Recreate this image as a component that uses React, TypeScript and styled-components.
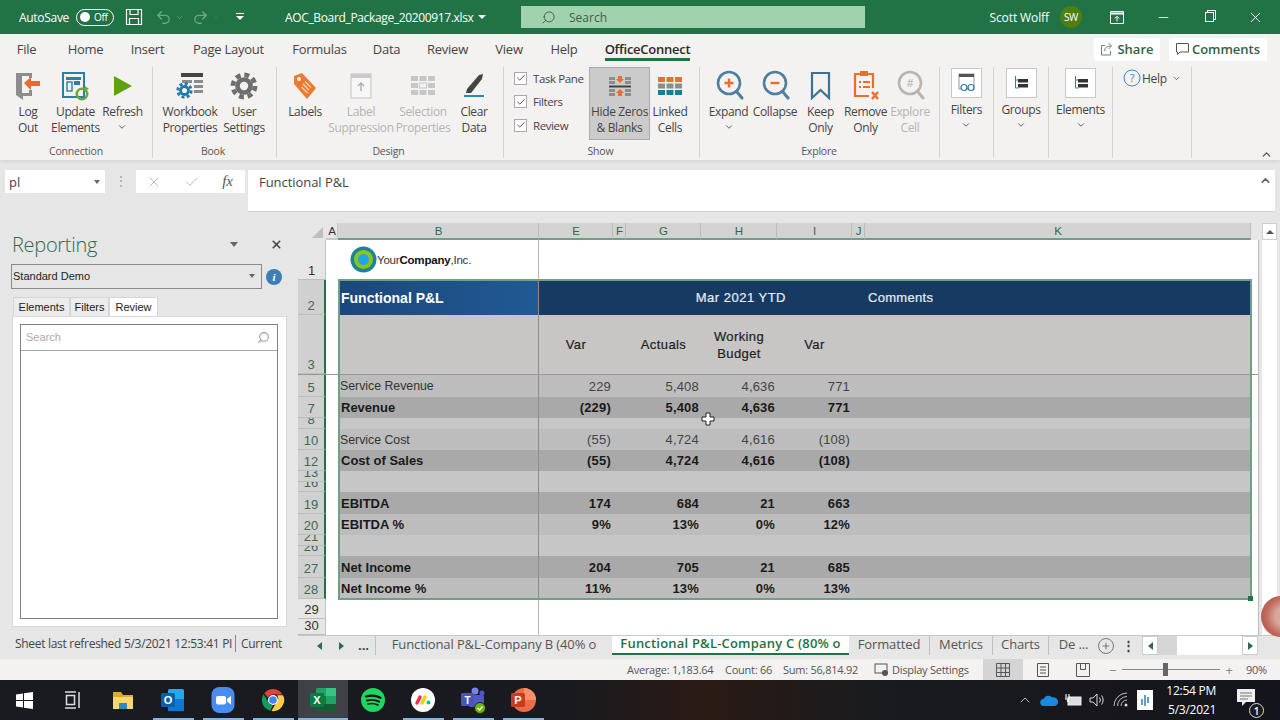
import React from 'react'
import styled, { createGlobalStyle } from 'styled-components'
import { ChevronDown, ChevronUp, Check, X, Minus, Search as SearchIcon, Plus, Undo2, Redo2 } from 'lucide-react'

const UI_FONT = `"Open Sans", "Noto Sans", sans-serif`
const SHEET_FONT = `"Liberation Sans", Arial, sans-serif`
const GREEN = '#217346'
const COLUMNS = '28px 12px 201px 74px 13px 75px 76px 75px 13px 386px'

const Global = createGlobalStyle`
  html, body { margin: 0; padding: 0; background: #e6e6e6; }
  * { box-sizing: border-box; }
`

/* ---------- small drawings ---------- */

const Gear = ({ size, color, hole = '#f3f2f1' }: { size: number; color: string; hole?: string }) => (
  <svg width={size} height={size} viewBox='0 0 24 24'>
    <circle cx='12' cy='12' r='9.5' fill='none' stroke={color} strokeWidth='4' strokeDasharray='4.2 3.26' />
    <circle cx='12' cy='12' r='7.6' fill={color} />
    <circle cx='12' cy='12' r='3.6' fill={hole} />
  </svg>
)

const LogOutIcon = () => (
  <svg width='26' height='28' viewBox='0 0 26 28'>
    <path fill='#8d8d8d' d='M1 1h16v5h-3V4H7v17h7v-3h3v6H8v4l-7-5z' />
    <path fill='#ea6a2a' d='M9 11l7-6v4h9v5h-9v4z' />
  </svg>
)

const UpdateIcon = () => (
  <svg width='30' height='30' viewBox='0 0 30 30'>
    <rect x='2' y='2' width='21' height='24' fill='none' stroke='#2a7ea8' strokeWidth='2' />
    <rect x='5' y='6' width='15' height='3' fill='#2a7ea8' />
    <rect x='6' y='11' width='5' height='9' fill='none' stroke='#2a7ea8' strokeWidth='1.4' />
    <rect x='13' y='10' width='6' height='4' fill='#2a7ea8' />
    <circle cx='21' cy='23' r='5.2' fill='none' stroke='#6aa83a' strokeWidth='2.6' />
    <path fill='#6aa83a' d='M24 15l4 3-5 2z' />
  </svg>
)

const PlayIcon = () => (
  <svg width='20' height='22' viewBox='0 0 20 22'><path fill='#5fa211' d='M1 1l18 10L1 21z' /></svg>
)

const WorkbookIcon = () => (
  <svg width='30' height='30' viewBox='0 0 30 30'>
    <rect x='6' y='2' width='22' height='4' fill='#444' />
    <g fill='#8b8b8b'>
      <rect x='7' y='9' width='10' height='3' /><rect x='19' y='9' width='9' height='3' />
      <rect x='19' y='14' width='9' height='3' /><rect x='19' y='19' width='9' height='3' />
    </g>
    <g transform='translate(1 11)'><Gear size={17} color='#1f78a8' /></g>
  </svg>
)

const LabelsIcon = () => (
  <svg width='26' height='30' viewBox='0 0 26 30'>
    <path fill='#ec7a2f' d='M2 5l8-3 14 15-9 11L2 13z' />
    <circle cx='7' cy='8' r='2' fill='#f3f2f1' />
    <path stroke='#fbd8bf' strokeWidth='1.3' d='M11 13l6 6M9.5 16l6 6M13 10.500l6 6' />
  </svg>
)

const SuppressionIcon = () => (
  <svg width='26' height='28' viewBox='0 0 26 28'>
    <rect x='3' y='2' width='20' height='24' fill='#f7f7f7' stroke='#c2c2c2' />
    <rect x='3' y='2' width='20' height='4' fill='#c9c9c9' />
    <path stroke='#b0b0b0' strokeWidth='1.5' fill='none' d='M13 19v-8M10 14l3-3 3 3' />
  </svg>
)

const SelectionIcon = () => (
  <svg width='30' height='26' viewBox='0 0 30 26'>
    <g fill='#c6c6c6'>
      {[0, 1, 2].flatMap((r) =>
        [0, 1, 2].map((c) => (r === 1 && c === 1 ? null : <rect key={`${r}${c}`} x={3 + c * 8.5} y={3 + r * 7} width='7' height='5' />))
      )}
    </g>
    <rect x='11.500' y='10' width='7' height='5' fill='none' stroke='#c6c6c6' />
  </svg>
)

const ClearIcon = () => (
  <svg width='24' height='28' viewBox='0 0 24 28'>
    <path fill='#444' d='M5 17L17 3l4-1-1 5-11 14-5 0z' />
    <rect x='2' y='23' width='20' height='2' fill='#2a8aa8' />
  </svg>
)

const HideZerosIcon = () => (
  <svg width='26' height='24' viewBox='0 0 26 24'>
    <g fill='#8c8c8c'>
      <rect x='2' y='3' width='6' height='3' /><rect x='18' y='3' width='6' height='3' />
      <rect x='2' y='7' width='6' height='3' /><rect x='18' y='7' width='6' height='3' />
      <rect x='2' y='15' width='6' height='3' /><rect x='18' y='15' width='6' height='3' />
      <rect x='2' y='19' width='6' height='3' /><rect x='18' y='19' width='6' height='3' />
    </g>
    <rect x='2' y='11.500' width='22' height='2' fill='#444' />
    <path fill='#e8702a' d='M11 2h4v3h2l-4 4-4-4h2zM13 15l4 4h-2v3h-4v-3H9z' />
  </svg>
)

const LinkedCellsIcon = () => {
  const rows = ['#e8702a', '#8c8c8c', '#1f7c96']
  return (
    <svg width='26' height='22' viewBox='0 0 26 22'>
      {rows.map((c, r) =>
        [0, 1, 2].map((i) => <rect key={`${r}${i}`} x={1 + i * 8.500} y={2 + r * 6.500} width='7' height='5' fill={c} />)
      )}
    </svg>
  )
}

const Magnifier = ({ ring, mark }: { ring: string; mark: React.ReactNode }) => (
  <svg width='30' height='32' viewBox='-2 0 30 32'>
    <circle cx='13' cy='13' r='11' fill='none' stroke={ring} strokeWidth='2.6' />
    <path stroke={ring} strokeWidth='3' strokeLinecap='round' d='M21 22l5 6' />
    {mark}
  </svg>
)

const BookmarkIcon = () => (
  <svg width='24' height='30' viewBox='0 0 24 30'>
    <path fill='none' stroke='#3c7296' strokeWidth='2.2' d='M3 2h17v25l-8.500-8L3 27z' />
  </svg>
)

const RemoveIcon = () => (
  <svg width='28' height='32' viewBox='0 0 28 32'>
    <path fill='none' stroke='#e8702a' strokeWidth='2.200' d='M17 26H3V4h18v14' />
    <rect x='8' y='1' width='8' height='5' fill='#e8702a' />
    <path stroke='#e8702a' strokeWidth='2' d='M7 12h2M7 17h2M11 12h7M11 17h7' />
    <path stroke='#e8702a' strokeWidth='2.400' d='M20 22l6 7M26 22l-6 7' />
  </svg>
)

const FilterBoxIcon = () => (
  <svg width='20' height='20' viewBox='0 0 20 20'>
    <rect x='2' y='1' width='15' height='15' fill='#fff' stroke='#9a9a9a' />
    <rect x='2' y='1' width='15' height='3' fill='#555' />
    <circle cx='7' cy='14.500' r='3' fill='#fff' stroke='#2a7ea8' strokeWidth='1.200' />
    <circle cx='14' cy='14.500' r='3' fill='#fff' stroke='#2a7ea8' strokeWidth='1.200' />
  </svg>
)

const TreeIcon = () => (
  <svg width='16' height='16' viewBox='0 0 16 16'>
    <path stroke='#2a7ea8' fill='none' d='M2.500 1v12h3M2.500 5h3' />
    <rect x='5' y='4' width='10' height='3.500' fill='#333' />
    <rect x='5' y='9' width='10' height='3.500' fill='#333' />
  </svg>
)

const HelpIcon = () => (
  <svg width='18' height='18' viewBox='0 0 18 18'>
    <circle cx='9' cy='9' r='8' fill='none' stroke='#3b87c4' />
    <text x='9' y='13' textAnchor='middle' fontSize='11' fill='#3b87c4' fontFamily={UI_FONT}>?</text>
  </svg>
)

const FloppyIcon = () => (
  <svg width='18' height='18' viewBox='0 0 18 18' fill='none' stroke='#fff' strokeWidth='1.200'>
    <path d='M1.500 1.500h15v15h-15z' />
    <path d='M5 1.500v5h8v-5M4.500 16.500v-6h9v6' />
  </svg>
)

const RibbonDisplayIcon = () => (
  <svg width='14' height='13' viewBox='0 0 14 13' fill='none' stroke='#fff'>
    <path d='M.5.500h13v12H.500z' />
    <path d='M.5 2.500h13' strokeWidth='2' />
    <path d='M7 10.500V5.500M4.800 7.500L7 5.300l2.200 2.200' />
  </svg>
)

const ShareIcon = () => (
  <svg width='14' height='14' viewBox='0 0 14 14' fill='none' stroke='#6f7f77'>
    <path d='M5 3.500H1.500v9.500h9V9' />
    <path d='M4.500 9c.4-3.500 2.500-5 6-5M8.500 1l3 3-3 3' />
  </svg>
)

const CommentIcon = () => (
  <svg width='13' height='13' viewBox='0 0 13 13' fill='none' stroke='#555'>
    <path d='M.5.500h12v8.500H4L1.500 11.500V9h-1z' />
  </svg>
)

const LogoMark = () => (
  <svg width='27' height='27' viewBox='0 0 27 27'>
    <circle cx='13.500' cy='13.500' r='13' fill='#17869c' />
    <circle cx='13.500' cy='13.500' r='9.500' fill='#8dc21f' />
    <circle cx='13.500' cy='13.500' r='5.500' fill='#1fa6e6' />
  </svg>
)

const FolderIcon = () => (
  <svg width='24' height='24' viewBox='0 0 24 24'>
    <path fill='#e0a92e' d='M2 4h8l2 3h10v14H2z' />
    <path fill='#f7d774' d='M2 9h20v12H2z' />
    <rect x='8' y='15' width='8' height='6' fill='#2f86c9' />
  </svg>
)

const OutlookIcon = () => (
  <svg width='26' height='26' viewBox='0 0 26 26'>
    <rect x='8' y='2' width='16' height='22' rx='1.500' fill='#28a8ea' />
    <path fill='#0f78d4' d='M8 12h16v12H8z' />
    <rect x='1' y='6' width='14' height='14' rx='1.500' fill='#0a5fad' />
    <text x='8' y='17' textAnchor='middle' fontSize='11' fontWeight='700' fill='#fff' fontFamily={SHEET_FONT}>O</text>
  </svg>
)

const ZoomIcon = () => (
  <svg width='24' height='28' viewBox='0 0 24 28'>
    <rect x='0.500' y='1' width='23' height='26' rx='8' fill='#4a8cf0' />
    <rect x='5' y='10' width='10' height='8.500' rx='2' fill='#fff' />
    <path fill='#fff' d='M16 13l4-3v8.500l-4-3z' />
  </svg>
)

const ChromeIcon = () => (
  <svg width='24' height='24' viewBox='0 0 24 24'>
    <path fill='#db4437' d='M12 1a11 11 0 0 1 9.500 5.500H12a5.500 5.500 0 0 0-5 3.200L3.300 5.300A11 11 0 0 1 12 1z' />
    <path fill='#0f9d58' d='M2.600 6.200L8 15a5.500 5.500 0 0 0 4 2.500L9.300 22.700A11 11 0 0 1 2.600 6.200z' />
    <path fill='#ffcd40' d='M22 7.200A11 11 0 0 1 10.500 23l4.500-8a5.500 5.500 0 0 0 1-7.800z' />
    <circle cx='12' cy='12' r='4.400' fill='#4285f4' stroke='#fff' strokeWidth='1.200' />
  </svg>
)

const ExcelIcon = () => (
  <svg width='28' height='26' viewBox='0 0 28 26'>
    <rect x='7' y='1' width='20' height='24' rx='1.500' fill='#21a366' />
    <rect x='17' y='1' width='10' height='8' fill='#33c481' />
    <rect x='7' y='9' width='10' height='8' fill='#107c41' />
    <rect x='7' y='17' width='20' height='8' fill='#185c37' />
    <rect x='1' y='6' width='14' height='14' rx='1.500' fill='#0e7a43' />
    <text x='8' y='17' textAnchor='middle' fontSize='11' fontWeight='700' fill='#fff' fontFamily={SHEET_FONT}>X</text>
  </svg>
)

const SpotifyIcon = () => (
  <svg width='24' height='24' viewBox='0 0 24 24'>
    <circle cx='12' cy='12' r='12' fill='#1ed760' />
    <g fill='none' stroke='#111' strokeLinecap='round'>
      <path strokeWidth='2.200' d='M5 8.500c5-1.400 10-1 14.500 1.300' />
      <path strokeWidth='1.900' d='M6 12.500c4.200-1.100 8.500-.7 12.200 1.200' />
      <path strokeWidth='1.600' d='M7 16c3.500-.8 7-.5 10 1' />
    </g>
  </svg>
)

const MondayIcon = () => (
  <svg width='24' height='24' viewBox='0 0 24 24'>
    <circle cx='12' cy='12' r='12' fill='#fff' />
    <path stroke='#f62b54' strokeWidth='3.400' strokeLinecap='round' d='M6 15l3-6' />
    <path stroke='#ffcc00' strokeWidth='3.400' strokeLinecap='round' d='M11 15l3-6' />
    <circle cx='17.500' cy='14.500' r='2' fill='#00ca72' />
  </svg>
)

const TeamsIcon = () => (
  <svg width='26' height='28' viewBox='0 0 26 28'>
    <circle cx='15' cy='5' r='3.500' fill='#7b83eb' />
    <circle cx='22' cy='7' r='2.500' fill='#5059c9' />
    <rect x='9' y='9' width='15' height='12' rx='1.500' fill='#5059c9' />
    <rect x='1' y='7' width='13' height='13' rx='1.500' fill='#4b53bc' />
    <text x='7.500' y='17.500' textAnchor='middle' fontSize='10' fontWeight='700' fill='#fff' fontFamily={SHEET_FONT}>T</text>
    <circle cx='20' cy='22' r='5.500' fill='#6bb700' stroke='#222' />
    <path stroke='#fff' strokeWidth='1.400' fill='none' d='M17.500 22l2 2 3-3.500' />
  </svg>
)

const PowerPointIcon = () => (
  <svg width='26' height='26' viewBox='0 0 26 26'>
    <circle cx='14' cy='13' r='12' fill='#ed6c47' />
    <path fill='#ff8f6b' d='M14 1a12 12 0 0 1 12 12H14z' />
    <rect x='1' y='6' width='14' height='14' rx='1.500' fill='#c43e1c' />
    <text x='8' y='17' textAnchor='middle' fontSize='11' fontWeight='700' fill='#fff' fontFamily={SHEET_FONT}>P</text>
  </svg>
)

/* ---------- data ---------- */

type Row = {
  n: string
  h: number
  tone: 'white' | 'head' | 'light' | 'mid' | 'dark'
  label?: string
  bold?: boolean
  vals?: string[]
}

const dataRows: Row[] = [
  { n: '5', h: 22, tone: 'mid', label: 'Service Revenue', vals: ['229', '5,408', '4,636', '771'] },
  { n: '7', h: 21, tone: 'dark', label: 'Revenue', bold: true, vals: ['(229)', '5,408', '4,636', '771'] },
  { n: '8', h: 11, tone: 'light' },
  { n: '10', h: 21, tone: 'mid', label: 'Service Cost', vals: ['(55)', '4,724', '4,616', '(108)'] },
  { n: '12', h: 21, tone: 'dark', label: 'Cost of Sales', bold: true, vals: ['(55)', '4,724', '4,616', '(108)'] },
  { n: '13', h: 11, tone: 'light' },
  { n: '16', h: 10, tone: 'light' },
  { n: '19', h: 22, tone: 'dark', label: 'EBITDA', bold: true, vals: ['174', '684', '21', '663'] },
  { n: '20', h: 21, tone: 'mid', label: 'EBITDA %', bold: true, vals: ['9%', '13%', '0%', '12%'] },
  { n: '21', h: 11, tone: 'light' },
  { n: '26', h: 10, tone: 'light' },
  { n: '27', h: 22, tone: 'dark', label: 'Net Income', bold: true, vals: ['204', '705', '21', '685'] },
  { n: '28', h: 21, tone: 'mid', label: 'Net Income %', bold: true, vals: ['11%', '13%', '0%', '13%'] },
]

const toneColor = { white: '#fff', head: '#c7c6c4', light: '#c6c6c6', mid: '#bdbdbd', dark: '#a9a9a9' }

/* ---------- page ---------- */

export default function App() {
  return (
    <Page>
      <Global />
      <TitleBar>
        <AutoSaveLabel>AutoSave</AutoSaveLabel>
        <Toggle><ToggleKnob />Off</Toggle>
        <TitleIcon $w={40}><FloppyIcon /></TitleIcon>
        <TitleIcon $w={18} $dim><Undo2 size={17} /></TitleIcon>
        <TitleIcon $w={14} $dim><ChevronDown size={9} /></TitleIcon>
        <TitleIcon $w={28} $dim><Redo2 size={17} /></TitleIcon>
        <TitleIcon $w={4} $dim><ChevronDown size={9} /></TitleIcon>
        <TitleIcon $w={44}><CustomizeMark /></TitleIcon>
        <FileName>AOC_Board_Package_20200917.xlsx</FileName>
        <TitleCaret />
        <SearchBox>
          <SearchIcon size={15} style={{ transform: 'scaleX(-1)' }} strokeWidth={1.5} />
          Search
        </SearchBox>
        <UserName>Scott Wolff</UserName>
        <Avatar>SW</Avatar>
        <WindowButton><RibbonDisplayIcon /></WindowButton>
        <WindowButton><Minus size={15} strokeWidth={1.3} /></WindowButton>
        <WindowButton><RestoreMark /></WindowButton>
        <WindowButton><X size={17} strokeWidth={1.3} /></WindowButton>
      </TitleBar>

      <TabsBar>
        <MenuTab $w={53}>File</MenuTab>
        <MenuTab $w={65}>Home</MenuTab>
        <MenuTab $w={59}>Insert</MenuTab>
        <MenuTab $w={103}>Page Layout</MenuTab>
        <MenuTab $w={79}>Formulas</MenuTab>
        <MenuTab $w={55}>Data</MenuTab>
        <MenuTab $w={67}>Review</MenuTab>
        <MenuTab $w={56}>View</MenuTab>
        <MenuTab $w={54}>Help</MenuTab>
        <MenuTab $w={113}><ActiveTabText>OfficeConnect</ActiveTabText></MenuTab>
        <ShareButton $w={66} $push>
          <ShareIcon />Share
        </ShareButton>
        <ShareButton $w={98}>
          <CommentIcon />Comments
        </ShareButton>
      </TabsBar>

      <Ribbon>
        <Group $w={153} $pad={4}>
          <GroupBody>
            <RibbonButton $w={48}><IconSlot><LogOutIcon /></IconSlot><ButtonText>Log<br />Out</ButtonText></RibbonButton>
            <RibbonButton $w={47}><IconSlot><UpdateIcon /></IconSlot><ButtonText>Update<br />Elements</ButtonText></RibbonButton>
            <RibbonButton $w={47}><IconSlot><PlayIcon /></IconSlot><ButtonText>Refresh<br /><ChevronDown size={10} /></ButtonText></RibbonButton>
          </GroupBody>
          <GroupLabel $shift={-2}>Connection</GroupLabel>
        </Group>
        <Group $w={124} $pad={7}>
          <GroupBody>
            <RibbonButton $w={60}><IconSlot><WorkbookIcon /></IconSlot><ButtonText>Workbook<br />Properties</ButtonText></RibbonButton>
            <RibbonButton $w={48}><IconSlot><Gear size={28} color='#6e6e6e' /></IconSlot><ButtonText>User<br />Settings</ButtonText></RibbonButton>
          </GroupBody>
          <GroupLabel $shift={-5}>Book</GroupLabel>
        </Group>
        <Group $w={227} $pad={3}>
          <GroupBody>
            <RibbonButton $w={50}><IconSlot><LabelsIcon /></IconSlot><ButtonText>Labels</ButtonText></RibbonButton>
            <RibbonButton $w={62} $disabled><IconSlot><SuppressionIcon /></IconSlot><ButtonText>Label<br />Suppression</ButtonText></RibbonButton>
            <RibbonButton $w={62} $disabled><IconSlot><SelectionIcon /></IconSlot><ButtonText>Selection<br />Properties</ButtonText></RibbonButton>
            <RibbonButton $w={40}><IconSlot><ClearIcon /></IconSlot><ButtonText>Clear<br />Data</ButtonText></RibbonButton>
          </GroupBody>
          <GroupLabel $shift={-3}>Design</GroupLabel>
        </Group>
        <Group $w={196} $pad={8}>
          <GroupBody>
            <ChecksColumn>
              <CheckRow><CheckBox><Check size={10} strokeWidth={2} /></CheckBox>Task Pane</CheckRow>
              <CheckRow><CheckBox><Check size={10} strokeWidth={2} /></CheckBox>Filters</CheckRow>
              <CheckRow><CheckBox><Check size={10} strokeWidth={2} /></CheckBox>Review</CheckRow>
            </ChecksColumn>
            <RibbonButton $w={61} $on><IconSlot><HideZerosIcon /></IconSlot><ButtonText>Hide Zeros<br />&amp; Blanks</ButtonText></RibbonButton>
            <RibbonButton $w={40}><IconSlot><LinkedCellsIcon /></IconSlot><ButtonText>Linked<br />Cells</ButtonText></RibbonButton>
          </GroupBody>
          <GroupLabel $shift={-5}>Show</GroupLabel>
        </Group>
        <Group $w={240} $pad={5}>
          <GroupBody>
            <RibbonButton $w={47}>
              <IconSlot>
                <Magnifier ring='#4f7f9f' mark={<path stroke='#e8702a' strokeWidth='2.400' d='M13 8.500v9M8.500 13h9' />} />
              </IconSlot>
              <ButtonText>Expand<br /><ChevronDown size={10} /></ButtonText>
            </RibbonButton>
            <RibbonButton $w={46}>
              <IconSlot>
                <Magnifier ring='#4f7f9f' mark={<path stroke='#e8702a' strokeWidth='2.400' d='M8.500 13h9' />} />
              </IconSlot>
              <ButtonText>Collapse</ButtonText>
            </RibbonButton>
            <RibbonButton $w={45}><IconSlot><BookmarkIcon /></IconSlot><ButtonText>Keep<br />Only</ButtonText></RibbonButton>
            <RibbonButton $w={45}><IconSlot><RemoveIcon /></IconSlot><ButtonText>Remove<br />Only</ButtonText></RibbonButton>
            <RibbonButton $w={44} $disabled>
              <IconSlot>
                <Magnifier ring='#b5b5b5' mark={<text x='13' y='17' fontSize='11' fontWeight='700' textAnchor='middle' fill='#bbb' fontFamily={SHEET_FONT}>#</text>} />
              </IconSlot>
              <ButtonText>Explore<br />Cell</ButtonText>
            </RibbonButton>
          </GroupBody>
          <GroupLabel $shift={-3}>Explore</GroupLabel>
        </Group>
        <Group $w={54}>
          <GroupBody>
            <RibbonButton $w={53}><BoxSlot><IconBox><FilterBoxIcon /></IconBox></BoxSlot><ButtonText>Filters<br /><ChevronDown size={10} /></ButtonText></RibbonButton>
          </GroupBody>
        </Group>
        <Group $w={55}>
          <GroupBody>
            <RibbonButton $w={54}><BoxSlot><IconBox><TreeIcon /></IconBox></BoxSlot><ButtonText>Groups<br /><ChevronDown size={10} /></ButtonText></RibbonButton>
          </GroupBody>
        </Group>
        <Group $w={64}>
          <GroupBody>
            <RibbonButton $w={63}><BoxSlot><IconBox><TreeIcon /></IconBox></BoxSlot><ButtonText>Elements<br /><ChevronDown size={10} /></ButtonText></RibbonButton>
          </GroupBody>
        </Group>
        <Group $w={79} $pad={10}>
          <HelpRow><HelpIcon />Help<ChevronDown size={9} /></HelpRow>
        </Group>
        <CollapseRibbon><ChevronUp size={13} /></CollapseRibbon>
      </Ribbon>

      <FormulaRow>
        <NameBox>pl<ChevronTiny /></NameBox>
        <GripDots>⋮</GripDots>
        <FxBox>
          <X size={16} color='#b9b9b9' strokeWidth={1.5} />
          <Check size={16} color='#b9b9b9' strokeWidth={1.5} />
          <FxText>fx</FxText>
        </FxBox>
        <FormulaInput>
          Functional P&amp;L
          <ChevronUp size={13} color='#666' strokeWidth={3} />
        </FormulaInput>
      </FormulaRow>

      <Main>
        <Pane>
          <PaneHead>
            <PaneTitle>Reporting</PaneTitle>
            <PaneCaret />
            <X size={13} color='#444' strokeWidth={3} />
          </PaneHead>
          <PaneSelectRow>
            <PaneSelect>Standard Demo<ChevronTiny /></PaneSelect>
            <InfoDot>i</InfoDot>
          </PaneSelectRow>
          <PaneTabs>
            <PaneTab $w={57}>Elements</PaneTab>
            <PaneTab $w={39}>Filters</PaneTab>
            <PaneTab $w={49} $active>Review</PaneTab>
          </PaneTabs>
          <PanePanel>
            <PaneInner>
              <PaneSearch>
                Search
                <SearchIcon size={13} color='#999' style={{ transform: 'scaleX(-1)' }} />
              </PaneSearch>
            </PaneInner>
          </PanePanel>
          <PaneFooter>
            <RefreshedText>Sheet last refreshed 5/3/2021 12:53:41 PI</RefreshedText>
            <CurrentText>Current</CurrentText>
          </PaneFooter>
        </Pane>

        <SheetArea>
          <SheetTop>
            <SheetGrid>
              <ColHeader>
                <Corner><CornerMark /></Corner>
                <ColCell>A</ColCell>
                {['B', 'E', 'F', 'G', 'H', 'I', 'J', 'K'].map((c) => (
                  <ColCell key={c} $selected>{c}</ColCell>
                ))}
              </ColHeader>
              <Rows>
                <SheetRow $h={40}>
                  <RowHead>1</RowHead>
                  <Cell />
                  <LabelCell $tone='white'>
                    <LogoWrap>
                      <LogoMark />
                      <LogoText>Your<b>Company</b>,Inc.</LogoText>
                    </LogoWrap>
                  </LabelCell>
                </SheetRow>
                <SheetRow $h={35}>
                  <RowHead $selected>2</RowHead>
                  <Cell />
                  <TitleLabel>Functional P&amp;L</TitleLabel>
                  <TitleBand>
                    <PeriodText>Mar 2021 YTD</PeriodText>
                    <CommentsText>Comments</CommentsText>
                  </TitleBand>
                </SheetRow>
                <SheetRow $h={60} $line>
                  <RowHead $selected>3</RowHead>
                  <Cell />
                  <LabelCell $tone='head' />
                  <HeadCell>Var</HeadCell>
                  <FillCell $tone='head' />
                  <HeadCell>Actuals</HeadCell>
                  <HeadCell>Working<br />Budget</HeadCell>
                  <HeadCell>Var</HeadCell>
                  <FillCell $tone='head' />
                  <FillCell $tone='head' />
                </SheetRow>
                {dataRows.map((r) => (
                  <SheetRow key={r.n} $h={r.h}>
                    <RowHead $selected>{r.n}</RowHead>
                    <Cell />
                    <LabelCell $tone={r.tone} $bold={r.bold}>{r.label}</LabelCell>
                    <NumCell $tone={r.tone} $bold={r.bold}>{r.vals?.[0]}</NumCell>
                    <FillCell $tone={r.tone} />
                    <NumCell $tone={r.tone} $bold={r.bold}>{r.vals?.[1]}</NumCell>
                    <NumCell $tone={r.tone} $bold={r.bold}>{r.vals?.[2]}</NumCell>
                    <NumCell $tone={r.tone} $bold={r.bold}>{r.vals?.[3]}</NumCell>
                    <FillCell $tone={r.tone} />
                    <FillCell $tone={r.tone} />
                  </SheetRow>
                ))}
                <SheetRow $h={20}>
                  <RowHead>29</RowHead>
                  <Cell />
                  <LabelCell $tone='white' />
                </SheetRow>
                <SheetRow $h={16}>
                  <RowHead>30</RowHead>
                  <Cell />
                  <LabelCell $tone='white' />
                </SheetRow>
                <Selection><SelectionHandle /></Selection>
                <CellCursor>
                  <svg width='14' height='14' viewBox='0 0 14 14'>
                    <path fill='#fff' stroke='#222' d='M5 1h4v4h4v4H9v4H5V9H1V5h4z' />
                  </svg>
                </CellCursor>
              </Rows>
            </SheetGrid>
            <VScroll>
              <ScrollUp><ArrowUpTiny /></ScrollUp>
            </VScroll>
          </SheetTop>
          <SheetTabs>
            <TabNav $w={32} $pad={10}><TriLeft /></TabNav>
            <TabNav $w={22}><TriRight /></TabNav>
            <TabNav $w={24} $sep>...</TabNav>
            <SheetTab $w={236}>Functional P&amp;L-Company B (40% o</SheetTab>
            <SheetTab $w={237} $active>Functional P&amp;L-Company C (80% o</SheetTab>
            <SheetTab $w={81} $sep>Formatted</SheetTab>
            <SheetTab $w={63} $sep>Metrics</SheetTab>
            <SheetTab $w={56} $sep>Charts</SheetTab>
            <SheetTab $w={49}>De ...</SheetTab>
            <AddSheet><Plus size={10} /></AddSheet>
            <TabNav $w={28}>⋮</TabNav>
            <HScroll>
              <HArrow><TriLeft /></HArrow>
              <HThumbGap />
              <HThumb />
              <HArrow><TriRight /></HArrow>
            </HScroll>
          </SheetTabs>
        </SheetArea>
      </Main>

      <StatusBar>
        <StatusItem $w={98}>Average: 1,183.64</StatusItem>
        <StatusItem $w={58}>Count: 66</StatusItem>
        <StatusItem $w={91}>Sum: 56,814.92</StatusItem>
        <StatusItem $w={109}>
          <svg width='16' height='14' viewBox='0 0 16 14'>
            <rect x='1' y='1' width='12' height='9' fill='none' stroke='#555' />
            <circle cx='11' cy='10' r='3' fill='#555' />
          </svg>
          Display Settings
        </StatusItem>
        <ViewButton $on>
          <svg width='14' height='14' viewBox='0 0 14 14' fill='none' stroke='#555'>
            <path d='M.5.500h13v13H.500zM.5 5h13M.5 9.500h13M5 .5v13M9.500.5v13' />
          </svg>
        </ViewButton>
        <ViewButton>
          <svg width='14' height='14' viewBox='0 0 14 14' fill='none' stroke='#555'>
            <path d='M1.500.5h11v13h-11zM4 4h6M4 7h6M4 10h6' />
          </svg>
        </ViewButton>
        <ViewButton>
          <svg width='14' height='14' viewBox='0 0 14 14' fill='none' stroke='#555'>
            <path d='M.5.500h13v13H.500zM4.500.5v6h5v-6' />
          </svg>
        </ViewButton>
        <ZoomSign $w={19}>−</ZoomSign>
        <ZoomSlider><ZoomThumb /></ZoomSlider>
        <ZoomSign $w={18}>+</ZoomSign>
        <ZoomValue>90%</ZoomValue>
      </StatusBar>

      <Taskbar>
        <TaskSlot $w={48}>
          <svg width='17' height='17' viewBox='0 0 17 17' fill='#fff'>
            <path d='M0 2.500l7-1v6.500H0zM8 1.300L17 0v8H8zM0 9h7v6.500l-7-1zM8 9h9v8l-9-1.300z' />
          </svg>
        </TaskSlot>
        <TaskSlot $w={50}>
          <svg width='18' height='18' viewBox='0 0 18 18' fill='none' stroke='#ddd'>
            <path d='M1 1h11M1 17h11M2.500 4.500h8v9h-8zM15 1v16' strokeWidth='1.500' />
          </svg>
        </TaskSlot>
        <TaskSlot $w={50}><FolderIcon /></TaskSlot>
        <TaskSlot $w={50} $open><OutlookIcon /></TaskSlot>
        <TaskSlot $w={50} $open><ZoomIcon /></TaskSlot>
        <TaskSlot $w={50} $open><ChromeIcon /></TaskSlot>
        <TaskSlot $w={50} $active><ExcelIcon /></TaskSlot>
        <TaskSlot $w={50}><SpotifyIcon /></TaskSlot>
        <TaskSlot $w={50} $open><MondayIcon /></TaskSlot>
        <TaskSlot $w={50} $open><TeamsIcon /></TaskSlot>
        <TaskSlot $w={50} $open><PowerPointIcon /></TaskSlot>
        <Tray>
          <TraySlot><ChevronUp size={16} color='#ddd' strokeWidth={1.2} /></TraySlot>
          <TraySlot>
            <svg width='18' height='12' viewBox='0 0 18 12'>
              <path fill='#1a8ae0' d='M4 12a3.500 3.500 0 0 1-.5-7A5 5 0 0 1 12 3.500a4 4 0 0 1 3 8.500z' />
            </svg>
          </TraySlot>
          <TraySlot>
            <svg width='18' height='14' viewBox='0 0 18 14' fill='none' stroke='#eee'>
              <rect x='4' y='4' width='13' height='8' fill='#ddd' />
              <path d='M2 1v5M5 1v5M1 6h5M3.500 6v3' strokeWidth='1.200' />
            </svg>
          </TraySlot>
          <TraySlot>
            <svg width='16' height='16' viewBox='0 0 16 16' fill='none' stroke='#ddd'>
              <path d='M1 6h3l4-4v12l-4-4H1zM10.500 5.500a4 4 0 0 1 0 5M12.500 3.500a7 7 0 0 1 0 9' />
            </svg>
          </TraySlot>
          <TraySlot>
            <svg width='16' height='16' viewBox='0 0 16 16' fill='none' stroke='#bbb'>
              <path d='M1 14A13 13 0 0 1 14 1M4.500 14a9.500 9.500 0 0 1 9.500-9.500M8 14a6 6 0 0 1 6-6' />
              <circle cx='13' cy='13' r='1.500' fill='#ddd' stroke='none' />
            </svg>
          </TraySlot>
          <TraySlot>
            <svg width='16' height='20' viewBox='0 0 16 20'>
              <rect width='16' height='20' fill='#fff' />
              <path stroke='#6a9cc9' strokeWidth='2' d='M5 15V9M8 16V5M11 13V7' />
            </svg>
          </TraySlot>
          <Clock>12:54 PM<br />5/3/2021</Clock>
          <Notify>
            <svg width='18' height='17' viewBox='0 0 18 17'>
              <path fill='#eee' d='M0 0h18v13H9l-4 4v-4H0z' />
              <path stroke='#777' d='M3 4h12M3 7h12M3 10h8' />
            </svg>
            <NotifyBadge>1</NotifyBadge>
          </Notify>
        </Tray>
      </Taskbar>

      <PresenterBubble />
    </Page>
  )
}

/* ---------- styles ---------- */

const Page = styled.div`
  position: relative;
  width: 1280px;
  height: 720px;
  overflow: hidden;
  display: flex;
  flex-direction: column;
  font-family: ${UI_FONT};
  color: #444;
`

const TitleBar = styled.div`
  height: 34px;
  flex: none;
  display: flex;
  align-items: center;
  background: ${GREEN};
  color: #fff;
  padding: 0 2px 0 19px;
  font-size: 12px;
  letter-spacing: -0.3px;
`

const AutoSaveLabel = styled.span`
  width: 57px;
`

const Toggle = styled.div`
  width: 38px;
  height: 17px;
  border: 1px solid #fff;
  border-radius: 9px;
  display: flex;
  align-items: center;
  gap: 4px;
  padding-left: 3px;
  font-size: 10px;
`

const ToggleKnob = styled.span`
  width: 10px;
  height: 10px;
  border-radius: 50%;
  background: #fff;
`

const TitleIcon = styled.div<{ $w: number; $dim?: boolean }>`
  width: ${(p) => p.$w}px;
  display: flex;
  justify-content: center;
  opacity: ${(p) => (p.$dim ? 0.35 : 1)};
`

const CustomizeMark = styled.span`
  width: 8px;
  height: 8px;
  border-top: 1px solid #fff;
  &::after {
    content: '';
    display: block;
    margin-top: 2px;
    border: 4px solid transparent;
    border-top: 4px solid #fff;
    border-bottom: none;
  }
`

const FileName = styled.span`
  margin-left: 23px;
  width: 193px;
  white-space: nowrap;
  letter-spacing: -0.35px;
`

const TitleCaret = styled.span`
  border: 4px solid transparent;
  border-top: 4px solid #fff;
  border-bottom: none;
`

const SearchBox = styled.div`
  margin-left: 35px;
  width: 344px;
  height: 22px;
  background: #a0d2ae;
  color: #3e5f4c;
  display: flex;
  align-items: center;
  gap: 13px;
  padding-left: 20px;
  font-size: 12px;
  letter-spacing: 0;
`

const UserName = styled.span`
  margin-left: auto;
  margin-right: 11px;
  letter-spacing: -0.1px;
`

const Avatar = styled.div`
  width: 22px;
  height: 22px;
  border-radius: 50%;
  background: #4f7f0e;
  display: flex;
  align-items: center;
  justify-content: center;
  font-size: 10px;
  margin-right: 12px;
`

const WindowButton = styled.div`
  width: 46px;
  display: flex;
  justify-content: center;
`

const RestoreMark = styled.span`
  width: 9px;
  height: 10px;
  border: 1px solid #fff;
  box-shadow: 2px -2px 0 -1px ${GREEN}, 2px -2px 0 0 #fff;
`

const TabsBar = styled.div`
  height: 32px;
  flex: none;
  display: flex;
  align-items: center;
  background: #f3f2f1;
  padding: 0 13px 2px 0;
`

const MenuTab = styled.div<{ $w: number }>`
  width: ${(p) => p.$w}px;
  text-align: center;
  font-size: 13px;
  letter-spacing: -0.25px;
  color: #444;
`

const ActiveTabText = styled.span`
  position: relative;
  font-weight: 600;
  color: #2a2a2a;
  &::after {
    content: '';
    position: absolute;
    left: 0;
    right: 0;
    bottom: -3px;
    height: 3px;
    background: ${GREEN};
  }
`

const ShareButton = styled.div<{ $w: number; $push?: boolean }>`
  width: ${(p) => p.$w}px;
  height: 23px;
  margin-left: ${(p) => (p.$push ? 'auto' : '9px')};
  background: #fff;
  border-radius: 2px;
  display: flex;
  align-items: center;
  justify-content: center;
  gap: 3px;
  font-size: 13px;
  font-weight: 600;
  color: #33614a;
`

const Ribbon = styled.div`
  height: 94px;
  flex: none;
  display: flex;
  padding-top: 1px;
  background: #f3f2f1;
  box-shadow: 0 2px 3px #d5d5d5;
  position: relative;
  z-index: 1;
`

const Group = styled.div<{ $w: number; $pad?: number }>`
  width: ${(p) => p.$w}px;
  height: 91px;
  padding-left: ${(p) => p.$pad ?? 0}px;
  border-right: 1px solid #d4d4d4;
  display: flex;
  flex-direction: column;
  justify-content: space-between;
`

const GroupBody = styled.div`
  display: flex;
`

const GroupLabel = styled.div<{ $shift: number }>`
  font-size: 10.5px;
  line-height: 14px;
  text-align: center;
  color: #555;
  letter-spacing: -0.2px;
  transform: translateX(${(p) => p.$shift}px);
`

const RibbonButton = styled.div<{ $w: number; $disabled?: boolean; $on?: boolean }>`
  width: ${(p) => p.$w}px;
  height: 73px;
  display: flex;
  flex-direction: column;
  align-items: center;
  color: ${(p) => (p.$disabled ? '#b4b4b4' : '#444')};
  background: ${(p) => (p.$on ? '#cbcbcb' : 'none')};
  outline: ${(p) => (p.$on ? '1px solid #ababab' : 'none')};
  outline-offset: -1px;
`

const IconSlot = styled.div`
  height: 37px;
  display: flex;
  align-items: center;
  justify-content: center;
`

const BoxSlot = styled.div`
  height: 35px;
  display: flex;
  align-items: flex-start;
  justify-content: center;
  padding-top: 1px;
`

const IconBox = styled.div`
  width: 31px;
  height: 30px;
  background: #fff;
  border: 1px solid #c8c8c8;
  display: flex;
  align-items: center;
  justify-content: center;
`

const ButtonText = styled.div`
  font-size: 12px;
  line-height: 16px;
  letter-spacing: -0.35px;
  text-align: center;
  white-space: nowrap;
`

const ChecksColumn = styled.div`
  width: 77px;
  display: flex;
  flex-direction: column;
  gap: 3px;
  padding: 1px 0 0 2px;
`

const CheckRow = styled.div`
  height: 20.5px;
  display: flex;
  align-items: center;
  gap: 6px;
  font-size: 11.5px;
  letter-spacing: -0.4px;
  white-space: nowrap;
`

const CheckBox = styled.span`
  width: 13px;
  height: 13px;
  background: #fff;
  border: 1px solid #aaa;
  display: flex;
  align-items: center;
  justify-content: center;
  color: #333;
`

const HelpRow = styled.div`
  display: flex;
  align-items: center;
  gap: 1px;
  font-size: 12px;
  letter-spacing: -0.3px;
  margin-top: 2px;
  svg:last-child {
    margin-left: 4px;
  }
`

const CollapseRibbon = styled.div`
  margin-left: auto;
  align-self: flex-end;
  padding: 0 7px 2px 0;
  height: 16px;
  color: #444;
`

const FormulaRow = styled.div`
  height: 62px;
  flex: none;
  display: flex;
  align-items: flex-start;
  padding: 10px 5px 0;
  background: #e6e6e6;
`

const NameBox = styled.div`
  width: 100px;
  height: 23px;
  background: #fff;
  display: flex;
  align-items: center;
  justify-content: space-between;
  padding: 0 5px 0 4px;
  font-size: 13px;
`

const ChevronTiny = styled.span`
  border: 3.5px solid transparent;
  border-top: 4px solid #666;
  border-bottom: none;
`

const GripDots = styled.div`
  width: 31px;
  text-align: center;
  font-size: 14px;
  line-height: 22px;
  color: #aaa;
`

const FxBox = styled.div`
  width: 109px;
  height: 23px;
  background: #fff;
  display: flex;
  align-items: center;
  justify-content: space-between;
  padding: 0 12px 0 10px;
`

const FxText = styled.span`
  font: italic 15px "Liberation Serif", serif;
  color: #555;
`

const FormulaInput = styled.div`
  margin-left: 3px;
  width: 1027px;
  height: 42px;
  background: #fff;
  border-bottom: 1px solid #d0d0d0;
  display: flex;
  align-items: flex-start;
  justify-content: space-between;
  padding: 4px 3px 0 11px;
  font-size: 13px;
  line-height: 17px;
  letter-spacing: -0.05px;
  color: #444;
`

const Main = styled.div`
  height: 437px;
  flex: none;
  display: flex;
  background: #e6e6e6;
`

const Pane = styled.div`
  width: 298px;
  flex: none;
  display: flex;
  flex-direction: column;
  padding: 9px 0 0 11px;
`

const PaneHead = styled.div`
  height: 26px;
  width: 272px;
  display: flex;
  align-items: center;
  padding-left: 1px;
`

const PaneTitle = styled.div`
  font-size: 20px;
  font-weight: 300;
  letter-spacing: -0.3px;
  color: #2f6a4c;
  width: 219px;
`

const PaneCaret = styled.span`
  border: 4.5px solid transparent;
  border-top: 5px solid #666;
  border-bottom: none;
  margin-right: 32px;
`

const PaneSelectRow = styled.div`
  margin-top: 7px;
  display: flex;
  align-items: center;
  gap: 4px;
`

const PaneSelect = styled.div`
  width: 251px;
  height: 25px;
  border: 1px solid #8a8a8a;
  display: flex;
  align-items: center;
  justify-content: space-between;
  padding: 0 6px 2px 1px;
  font: 11px ${SHEET_FONT};
  color: #222;
`

const InfoDot = styled.div`
  width: 16px;
  height: 16px;
  border-radius: 50%;
  background: #3d7fb3;
  color: #fff;
  display: flex;
  align-items: center;
  justify-content: center;
  font: italic bold 11px "Liberation Serif", serif;
`

const PaneTabs = styled.div`
  margin: 8px 0 0 2px;
  height: 19px;
  display: flex;
`

const PaneTab = styled.div<{ $w: number; $active?: boolean }>`
  width: ${(p) => p.$w}px;
  height: 19px;
  display: flex;
  align-items: center;
  justify-content: center;
  font: 11px ${SHEET_FONT};
  color: #222;
  background: ${(p) => (p.$active ? '#fff' : '#ececec')};
  border: 1px solid #d5d5d5;
  border-bottom: none;
`

const PanePanel = styled.div`
  margin-left: 1px;
  width: 275px;
  height: 311px;
  background: #fff;
  border: 1px solid #d8d8d8;
  padding: 7px 0 0 7px;
`

const PaneInner = styled.div`
  width: 258px;
  height: 295px;
  border: 1px solid #808080;
`

const PaneSearch = styled.div`
  height: 26px;
  border-bottom: 1px solid #a8a8a8;
  display: flex;
  align-items: center;
  justify-content: space-between;
  padding: 0 7px 1px 5px;
  font: 11px ${SHEET_FONT};
  color: #aaa;
`

const PaneFooter = styled.div`
  margin-top: 6px;
  height: 20px;
  display: flex;
  align-items: center;
  padding-left: 4px;
  font-size: 12px;
  letter-spacing: -0.3px;
`

const RefreshedText = styled.span`
  width: 221px;
  white-space: nowrap;
  overflow: hidden;
  border-right: 1px solid #888;
`

const CurrentText = styled.span`
  margin-left: 5px;
`

const SheetArea = styled.div`
  flex: 1;
  display: flex;
  flex-direction: column;
  min-width: 0;
`

const SheetTop = styled.div`
  height: 413px;
  padding-top: 1px;
  display: flex;
`

const SheetGrid = styled.div`
  width: 961px;
  display: flex;
  flex-direction: column;
`

const ColHeader = styled.div`
  height: 17px;
  flex: none;
  display: grid;
  grid-template-columns: ${COLUMNS};
`

const Corner = styled.div`
  background: #e6e6e6;
  display: flex;
  align-items: flex-end;
  justify-content: flex-end;
  padding: 0 3px 2px 0;
`

const CornerMark = styled.span`
  border-left: 11px solid transparent;
  border-bottom: 11px solid #bfbfbf;
`

const ColCell = styled.div<{ $selected?: boolean }>`
  background: ${(p) => (p.$selected ? '#d3d3d3' : '#e6e6e6')};
  border-right: 1px solid ${(p) => (p.$selected ? '#bdbdbd' : '#c8c8c8')};
  border-bottom: 2px solid ${(p) => (p.$selected ? '#6f9f85' : '#c8c8c8')};
  padding-left: 1px;
  font: 11.500px/16px ${SHEET_FONT};
  text-align: center;
  color: ${(p) => (p.$selected ? '#2f6a4c' : '#333')};
  overflow: hidden;
`

const Rows = styled.div`
  position: relative;
  flex: 1;
  background: #fff;
  border-right: 1px solid #bdbdbd;
`

const SheetRow = styled.div<{ $h: number; $line?: boolean }>`
  height: ${(p) => p.$h}px;
  display: grid;
  grid-template-columns: ${COLUMNS};
  ${(p) => (p.$line ? 'border-bottom: 1px solid #989898;' : '')}
`

const RowHead = styled.div<{ $selected?: boolean }>`
  background: ${(p) => (p.$selected ? '#d0d0d0' : '#e6e6e6')};
  border-right: ${(p) => (p.$selected ? `2px solid ${GREEN}` : '1px solid #c0c0c0')};
  border-bottom: 1px solid #bdbdbd;
  display: flex;
  align-items: flex-end;
  justify-content: center;
  padding-bottom: 1px;
  font: 13px/15px ${SHEET_FONT};
  color: ${(p) => (p.$selected ? '#3f6a55' : '#333')};
  overflow: hidden;
`

const Cell = styled.div`
  background: #fff;
`

const LabelCell = styled.div<{ $tone: Row['tone']; $bold?: boolean }>`
  background: ${(p) => toneColor[p.$tone]};
  border-right: 1px solid ${(p) => (p.$tone === 'white' ? '#b5b5b5' : '#8c8c8c')};
  display: flex;
  align-items: center;
  padding-left: ${(p) => (p.$bold ? 3 : 2)}px;
  font: ${(p) => (p.$bold ? 'bold 13px' : '12.300px')} ${SHEET_FONT};
  color: ${(p) => (p.$bold ? '#1a1a1a' : '#333')};
  white-space: nowrap;
  overflow: hidden;
`

const NumCell = styled.div<{ $tone: Row['tone']; $bold?: boolean }>`
  background: ${(p) => toneColor[p.$tone]};
  display: flex;
  align-items: center;
  justify-content: flex-end;
  padding-right: 2px;
  font: ${(p) => (p.$bold ? 'bold 13px' : '13px')} ${SHEET_FONT};
  color: ${(p) => (p.$bold ? '#1a1a1a' : '#444')};
  letter-spacing: 0.2px;
`

const FillCell = styled.div<{ $tone: Row['tone'] }>`
  background: ${(p) => toneColor[p.$tone]};
`

const HeadCell = styled.div`
  background: ${toneColor.head};
  display: flex;
  align-items: center;
  justify-content: center;
  text-align: center;
  font: 13px/17px ${SHEET_FONT};
  color: #222;
  letter-spacing: 0.4px;
  -webkit-text-stroke: 0.2px #222;
`

const TitleLabel = styled.div`
  background: linear-gradient(90deg, #1b477b, #205a94);
  border-right: 1px solid #8c8c8c;
  display: flex;
  align-items: center;
  padding-left: 3px;
  font: bold 14px ${SHEET_FONT};
  color: #fff;
`

const TitleBand = styled.div`
  grid-column: 4 / -1;
  background: #173a63;
  display: flex;
  align-items: center;
  font: 13px ${SHEET_FONT};
  color: #e8eef3;
  -webkit-text-stroke: 0.2px #e8eef3;
  letter-spacing: 0.5px;
`

const PeriodText = styled.span`
  width: 313px;
  text-align: right;
  padding-right: 66px;
  white-space: nowrap;
`

const CommentsText = styled.span`
  margin-left: 16px;
  letter-spacing: 0.3px;
`

const LogoWrap = styled.div`
  display: flex;
  align-items: center;
  margin: -1px 0 0 10px;
`

const LogoText = styled.span`
  font: 11.500px ${SHEET_FONT};
  color: #333;
  letter-spacing: -0.2px;
  b {
    color: #111;
  }
`

const Selection = styled.div`
  position: absolute;
  left: 40px;
  top: 39px;
  width: 914px;
  height: 321px;
  border: 2px solid #6f9f85;
  pointer-events: none;
`

const SelectionHandle = styled.span`
  position: absolute;
  right: -3px;
  bottom: -3px;
  width: 5px;
  height: 5px;
  background: ${GREEN};
`

const CellCursor = styled.div`
  position: absolute;
  left: 403px;
  top: 169px;
`

const VScroll = styled.div`
  margin-left: 3px;
  width: 15px;
  background: #fff;
`

const ScrollUp = styled.div`
  height: 17px;
  display: flex;
  align-items: center;
  justify-content: center;
  border: 1px solid #cfcfcf;
`

const ArrowUpTiny = styled.span`
  border: 4px solid transparent;
  border-bottom: 4px solid #555;
  border-top: none;
`

const SheetTabs = styled.div`
  height: 24px;
  flex: none;
  display: flex;
  align-items: stretch;
  border-top: 1px solid #c8c8c8;
  padding-bottom: 4px;
  font-size: 13px;
  line-height: 17px;
  letter-spacing: -0.12px;
`

const TabNav = styled.div<{ $w: number; $pad?: number; $sep?: boolean }>`
  width: ${(p) => p.$w}px;
  padding-left: ${(p) => p.$pad ?? 0}px;
  display: flex;
  align-items: center;
  justify-content: center;
  color: #444;
  font-weight: 700;
  border-right: ${(p) => (p.$sep ? '1px solid #c0c0c0' : 'none')};
`

const TriLeft = styled.span`
  border: 4px solid transparent;
  border-right: 5px solid #2f6a4c;
  border-left: none;
`

const TriRight = styled.span`
  border: 4px solid transparent;
  border-left: 5px solid #2f6a4c;
  border-right: none;
`

const SheetTab = styled.div<{ $w: number; $active?: boolean; $sep?: boolean }>`
  width: ${(p) => p.$w}px;
  display: flex;
  align-items: center;
  justify-content: center;
  padding-bottom: 2px;
  white-space: nowrap;
  overflow: hidden;
  background: ${(p) => (p.$active ? '#fff' : 'none')};
  color: ${(p) => (p.$active ? '#1e7145' : '#555')};
  font-weight: ${(p) => (p.$active ? 600 : 400)};
  letter-spacing: ${(p) => (p.$active ? '0.2px' : 'inherit')};
  border-bottom: ${(p) => (p.$active ? `2px solid ${GREEN}` : 'none')};
  border-right: ${(p) => (p.$sep ? '1px solid #c0c0c0' : 'none')};
`

const AddSheet = styled.div`
  width: 16px;
  height: 16px;
  align-self: center;
  border: 1px solid #777;
  border-radius: 50%;
  display: flex;
  align-items: center;
  justify-content: center;
  color: #666;
`

const HScroll = styled.div`
  width: 116px;
  display: flex;
  align-items: stretch;
  background: #d6d6d6;
`

const HArrow = styled.div`
  width: 16px;
  background: #fff;
  border: 1px solid #ccc;
  display: flex;
  align-items: center;
  justify-content: center;
`

const HThumbGap = styled.div`
  width: 19px;
`

const HThumb = styled.div`
  flex: 1;
  background: #fff;
`

const StatusBar = styled.div`
  height: 21px;
  flex: none;
  display: flex;
  align-items: stretch;
  background: #f3f2f1;
  padding-left: 627px;
  font-size: 11px;
  letter-spacing: -0.25px;
  color: #555;
`

const StatusItem = styled.div<{ $w: number }>`
  width: ${(p) => p.$w}px;
  display: flex;
  align-items: center;
  gap: 2px;
  white-space: nowrap;
`

const ViewButton = styled.div<{ $on?: boolean }>`
  width: 40px;
  display: flex;
  align-items: center;
  justify-content: center;
  background: ${(p) => (p.$on ? '#d4d4d4' : 'none')};
`

const ZoomSign = styled.div<{ $w: number }>`
  width: ${(p) => p.$w}px;
  display: flex;
  align-items: center;
  justify-content: center;
  color: #888;
  font-size: 13px;
`

const ZoomSlider = styled.div`
  position: relative;
  width: 98px;
  align-self: center;
  height: 1px;
  background: #888;
`

const ZoomThumb = styled.span`
  position: absolute;
  left: 41px;
  top: -6px;
  width: 5px;
  height: 13px;
  background: #666;
`

const ZoomValue = styled.div`
  margin-left: 8px;
  display: flex;
  align-items: center;
`

const Taskbar = styled.div`
  height: 40px;
  flex: none;
  display: flex;
  background: linear-gradient(90deg, #1a1b20, #191a1f 44%, #2a1a14 55%, #1a1b1e 68%, #14141c);
`

const TaskSlot = styled.div<{ $w: number; $open?: boolean; $active?: boolean }>`
  position: relative;
  width: ${(p) => p.$w}px;
  display: flex;
  align-items: center;
  justify-content: center;
  background: ${(p) => (p.$active ? '#3f4146' : 'none')};
  &::after {
    content: '';
    display: ${(p) => (p.$open || p.$active ? 'block' : 'none')};
    position: absolute;
    bottom: 0;
    left: ${(p) => (p.$active ? 0 : 5)}px;
    right: ${(p) => (p.$active ? 0 : 4)}px;
    height: 2px;
    background: #7fb6e6;
  }
`

const Tray = styled.div`
  margin-left: auto;
  display: flex;
  align-items: center;
  padding-right: 21px;
`

const TraySlot = styled.div`
  width: 24px;
  display: flex;
  justify-content: center;
`

const Clock = styled.div`
  margin-left: 1px;
  width: 58px;
  text-align: right;
  font-size: 12px;
  line-height: 19px;
  letter-spacing: -0.25px;
  color: #fff;
`

const Notify = styled.div`
  position: relative;
  margin-left: 21px;
  width: 22px;
`

const NotifyBadge = styled.span`
  position: absolute;
  right: -5px;
  bottom: -7px;
  width: 15px;
  height: 15px;
  border-radius: 50%;
  border: 1px solid #ddd;
  background: #1a1a1e;
  color: #fff;
  font-size: 10px;
  font-weight: 600;
  display: flex;
  align-items: center;
  justify-content: center;
`

const PresenterBubble = styled.div`
  position: absolute;
  left: 1261px;
  top: 596px;
  width: 40px;
  height: 41px;
  border-radius: 50%;
  background: radial-gradient(circle at 60% 50%, #d9a79c 0 30%, #c06a5c 60%, #a5483f);
`
